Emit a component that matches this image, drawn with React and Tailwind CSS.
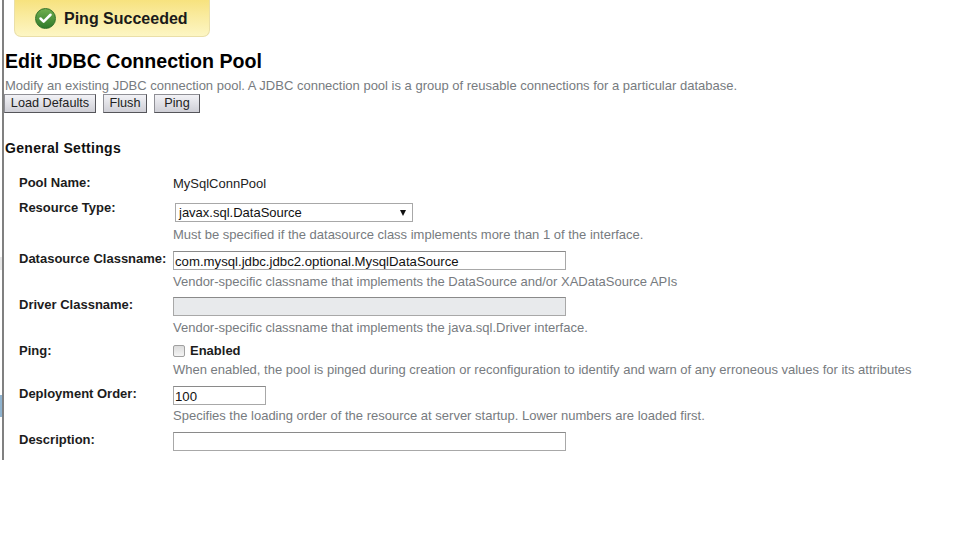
import { Check } from "lucide-react"

function Label({ children }) {
  return <div className="w-[154px] shrink-0 text-[13px] leading-[15px] font-bold text-[#1c1c1c]">{children}</div>
}

function Help({ children, className = "" }) {
  return <div className={`text-[13px] leading-[15px] text-[#777b80] ${className}`}>{children}</div>
}

function Field({ className = "", children }) {
  return (
    <div className={`h-[19px] border border-[#a8a8a8] border-t-[#8a8a8a] text-[13.2px] leading-[19px] pl-[1px] text-[#111] ${className}`}>
      {children}
    </div>
  )
}

function Btn({ children, className = "" }) {
  return (
    <div className={`h-[19px] bg-gradient-to-b from-[#f2f2f6] to-[#cfcfd6] border border-[#8f8f95] border-r-[#55555a] border-b-[#55555a] text-[12.7px] leading-[17px] text-center text-[#222] ${className}`}>
      {children}
    </div>
  )
}

export default function App() {
  return (
    <div className="w-[960px] h-[540px] bg-white flex overflow-hidden font-['Liberation_Sans',Arial,sans-serif]">
      {/* left edge */}
      <div className="w-[2px] shrink-0 pt-[257px]">
        <div className="h-[13px] bg-[#e8e8e8]" />
        <div className="mt-[125px] h-[22px] bg-[#8fb3cf]" />
      </div>
      <div className="w-[958px] h-[460px] border-l-2 border-[#808080] pl-[1px]">
        {/* alert */}
        <div className="ml-[9px] w-[196px] h-[37px] pt-[1px] rounded-b-[7px] border border-t-0 border-[#eadfa8] bg-gradient-to-b from-[#f7e27e] to-[#fdf6c4] flex items-center pl-[20px] gap-[8px]">
          <div className="w-[21px] h-[21px] rounded-full bg-gradient-to-b from-[#6fae4e] to-[#2f7a2a] border border-[#2d6e28] flex items-center justify-center">
            <Check size={15} strokeWidth={4} className="text-white" />
          </div>
          <span className="text-[16px] font-bold text-[#1a1a1a]">Ping Succeeded</span>
        </div>

        <h1 className="mt-[12px] text-[19.6px] leading-[24px] font-bold text-black">Edit JDBC Connection Pool</h1>
        <Help className="mt-[5px]">
          Modify an existing JDBC connection pool. A JDBC connection pool is a group of reusable connections for a particular database.
        </Help>
        <div className="flex mt-[1px] -ml-[1px]">
          <Btn className="w-[92px]">Load Defaults</Btn>
          <Btn className="w-[44px] ml-[7px]">Flush</Btn>
          <Btn className="w-[46px] ml-[7px]">Ping</Btn>
        </div>

        <h2 className="mt-[27px] text-[14px] leading-[16px] font-bold text-[#111] tracking-[0.3px]">General Settings</h2>

        <div className="pl-[14px] mt-[19px]">
          <div className="flex h-[25px]">
            <Label>Pool Name:</Label>
            <div className="text-[13px] leading-[17px] text-[#222]">MySqlConnPool</div>
          </div>

          <div className="flex h-[51px]">
            <Label>Resource Type:</Label>
            <div>
              <div className="ml-[2px] mt-[3px] w-[238px] h-[19px] border border-[#a8a8a8] flex items-center justify-between pl-[3px] pr-[6px] text-[13px] text-[#111]">
                <span>javax.sql.DataSource</span>
                <span className="w-0 h-0 border-x-[3px] border-x-transparent border-t-[6px] border-t-[#111]" />
              </div>
              <Help className="mt-[5px]">Must be specified if the datasource class implements more than 1 of the interface.</Help>
            </div>
          </div>

          <div className="flex h-[46px]">
            <Label>Datasource Classname:</Label>
            <div>
              <Field className="w-[393px]">com.mysql.jdbc.jdbc2.optional.MysqlDataSource</Field>
              <Help className="mt-[4px]">Vendor-specific classname that implements the DataSource and/or XADataSource APIs</Help>
            </div>
          </div>

          <div className="flex h-[46px]">
            <Label>Driver Classname:</Label>
            <div>
              <Field className="w-[393px] bg-[#e8eaec]" />
              <Help className="mt-[4px]">Vendor-specific classname that implements the java.sql.Driver interface.</Help>
            </div>
          </div>

          <div className="flex h-[43px]">
            <Label>Ping:</Label>
            <div>
              <div className="flex items-center h-[15px]">
                <div className="w-[12px] h-[12px] rounded-[2px] border border-[#a0a0a0] bg-gradient-to-b from-[#dcdcdc] to-[#f4f4f4]" />
                <span className="ml-[5px] text-[13px] font-bold text-[#1c1c1c]">Enabled</span>
              </div>
              <Help className="mt-[4px]">When enabled, the pool is pinged during creation or reconfiguration to identify and warn of any erroneous values for its attributes</Help>
            </div>
          </div>

          <div className="flex h-[46px]">
            <Label>Deployment Order:</Label>
            <div>
              <Field className="w-[93px]">100</Field>
              <Help className="mt-[3px]">Specifies the loading order of the resource at server startup. Lower numbers are loaded first.</Help>
            </div>
          </div>

          <div className="flex">
            <Label>Description:</Label>
            <Field className="w-[393px]" />
          </div>
        </div>
      </div>
    </div>
  )
}
